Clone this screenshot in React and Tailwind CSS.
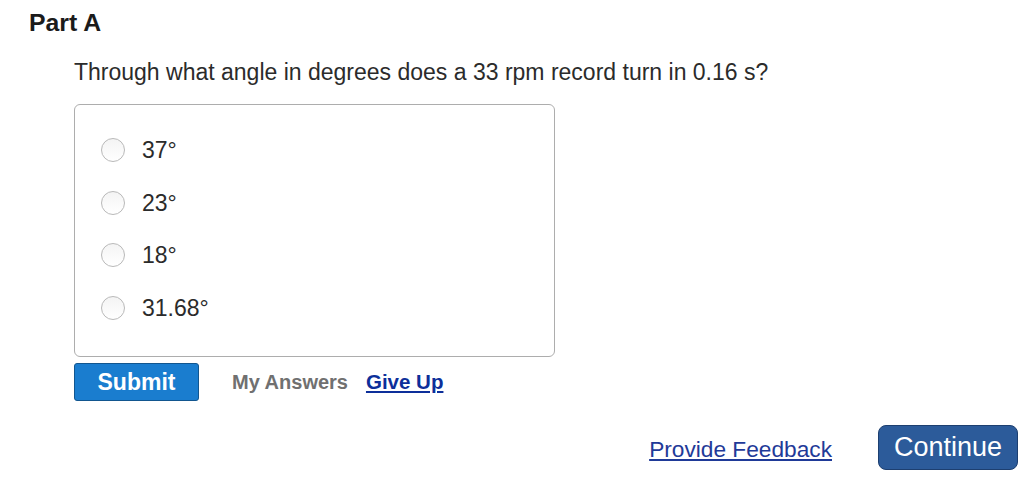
import React, { useState } from "react";

const options = ["37°", "23°", "18°", "31.68°"];

const App = () => {
  const [picked, setPicked] = useState(null);

  return (
    <div className="w-[1024px] h-[497px] bg-white text-[#222] font-['Liberation_Sans',Arial,sans-serif]">
      <div className="pt-[9px] pl-[29px]">
        <h2 className="text-[24.8px] leading-[28px] font-bold text-[#1b1b1b]">Part A</h2>
      </div>

      <div className="pl-[74px]">
        <p className="mt-[21px] text-[23px] leading-[28px] text-[#2b2b2b]">
          Through what angle in degrees does a 33 rpm record turn in 0.16 s?
        </p>

        {/* Choices */}
        <div className="mt-[18px] w-[481px] h-[253px] border border-[#adadad] rounded-[6px] pt-[19px] pl-[26px]">
          {options.map((opt, i) => (
            <label key={i} className="flex items-center h-[52.6px] cursor-pointer" onClick={() => setPicked(i)}>
              <span className="w-[24px] h-[24px] rounded-full border border-[#b9b9b9] bg-gradient-to-b from-[#f4f4f4] to-white flex items-center justify-center">
                {picked === i && <span className="w-[11px] h-[11px] rounded-full bg-[#1a7bcc]" />}
              </span>
              <span className="ml-[17px] text-[23px] text-[#2b2b2b]">{opt}</span>
            </label>
          ))}
        </div>

        {/* Toolbar */}
        <div className="mt-[6px] flex items-center">
          <button className="w-[125px] h-[38px] bg-[#1a7dcf] border border-[#12568f] rounded-[3px] text-white font-bold text-[23px] leading-none">
            Submit
          </button>
          <span className="ml-[33px] text-[20px] font-bold text-[#707070]">My Answers</span>
          <a className="ml-[18px] text-[20.5px] font-bold text-[#0d2f9a] underline">Give Up</a>
        </div>
      </div>

      {/* Footer */}
      <div className="mt-[24px] pr-[6px] flex items-center justify-end">
        <a className="mt-[3px] text-[22.7px] text-[#1f3a98] underline">Provide Feedback</a>
        <button className="ml-[46px] w-[140px] h-[45px] bg-[#2c5b9a] border border-[#1d3f70] rounded-[8px] text-white text-[27px] leading-none">
          Continue
        </button>
      </div>
    </div>
  );
};

export default App;
